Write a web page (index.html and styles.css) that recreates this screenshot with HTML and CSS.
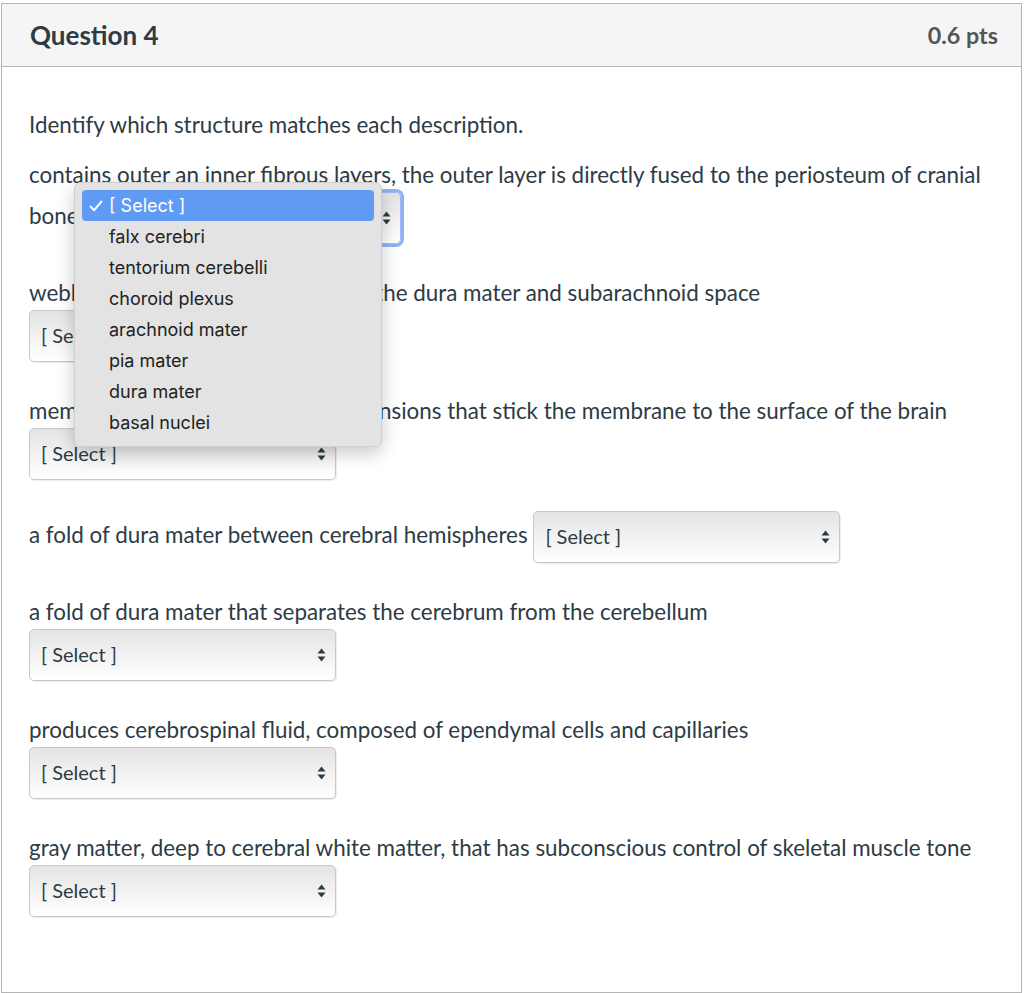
FILE: index.html
```html
<!DOCTYPE html>
<html lang="en">
<head>
    <meta charset="UTF-8">
    <meta name="viewport" content="width=device-width, initial-scale=1.0">
    <title>Question 4</title>
    <link rel="stylesheet" href="styles.css">
</head>
<body>

<div class="question">
    <div class="question-header">
        <span class="question-name">Question 4</span>
        <span class="question-points">0.6 pts</span>
    </div>

    <div class="question-body">
        <p class="question-intro">Identify which structure matches each description.</p>

        <p class="question-item">contains outer an inner fibrous layers, the outer layer is directly fused to the periosteum of cranial bones
            <span class="select-wrap">
                <span class="select-box is-focused">
                    <span class="select-value">[ Select ]</span>
                    <svg class="select-arrows" width="9" height="16" viewBox="0 0 9 16"><path d="M4.5 1.5L8.5 6.5H0.5Z M4.5 14.5L0.5 9.5H8.5Z"/></svg>
                </span>
                <span class="dropdown" role="listbox">
                    <span class="dropdown-option is-selected" role="option">
                        <svg class="dropdown-check" width="14" height="12" viewBox="0 0 14 12"><path d="M1.5 6.5L5.2 10.2L12.5 1.5"/></svg>
                        [ Select ]
                    </span>
                    <span class="dropdown-option" role="option">falx cerebri</span>
                    <span class="dropdown-option" role="option">tentorium cerebelli</span>
                    <span class="dropdown-option" role="option">choroid plexus</span>
                    <span class="dropdown-option" role="option">arachnoid mater</span>
                    <span class="dropdown-option" role="option">pia mater</span>
                    <span class="dropdown-option" role="option">dura mater</span>
                    <span class="dropdown-option" role="option">basal nuclei</span>
                </span>
            </span>
        </p>

        <p class="question-item">weblike membrane found between the dura mater and subarachnoid space
            <span class="select-box">
                <span class="select-value">[ Select ]</span>
                <svg class="select-arrows" width="9" height="16" viewBox="0 0 9 16"><path d="M4.5 1.5L8.5 6.5H0.5Z M4.5 14.5L0.5 9.5H8.5Z"/></svg>
            </span>
        </p>

        <p class="question-item">membrane that is delicate with extensions that stick the membrane to the surface of the brain
            <span class="select-box">
                <span class="select-value">[ Select ]</span>
                <svg class="select-arrows" width="9" height="16" viewBox="0 0 9 16"><path d="M4.5 1.5L8.5 6.5H0.5Z M4.5 14.5L0.5 9.5H8.5Z"/></svg>
            </span>
        </p>

        <p class="question-item">a fold of dura mater between cerebral hemispheres
            <span class="select-box">
                <span class="select-value">[ Select ]</span>
                <svg class="select-arrows" width="9" height="16" viewBox="0 0 9 16"><path d="M4.5 1.5L8.5 6.5H0.5Z M4.5 14.5L0.5 9.5H8.5Z"/></svg>
            </span>
        </p>

        <p class="question-item">a fold of dura mater that separates the cerebrum from the cerebellum
            <span class="select-box">
                <span class="select-value">[ Select ]</span>
                <svg class="select-arrows" width="9" height="16" viewBox="0 0 9 16"><path d="M4.5 1.5L8.5 6.5H0.5Z M4.5 14.5L0.5 9.5H8.5Z"/></svg>
            </span>
        </p>

        <p class="question-item">produces cerebrospinal fluid, composed of ependymal cells and capillaries
            <span class="select-box">
                <span class="select-value">[ Select ]</span>
                <svg class="select-arrows" width="9" height="16" viewBox="0 0 9 16"><path d="M4.5 1.5L8.5 6.5H0.5Z M4.5 14.5L0.5 9.5H8.5Z"/></svg>
            </span>
        </p>

        <p class="question-item">gray matter, deep to cerebral white matter, that has subconscious control of skeletal muscle tone
            <span class="select-box">
                <span class="select-value">[ Select ]</span>
                <svg class="select-arrows" width="9" height="16" viewBox="0 0 9 16"><path d="M4.5 1.5L8.5 6.5H0.5Z M4.5 14.5L0.5 9.5H8.5Z"/></svg>
            </span>
        </p>
    </div>
</div>

</body>
</html>
```

FILE: styles.css
```css
body {
    margin: 0;
    font-family: Lato, "Open Sans", Arial, sans-serif;
    color: #2d3b45;
    background-color: #fff;
}
.question {
    margin: 3px 2px 0 1px;
    border: 1px solid #b5b5b5;
    height: 990px;
    box-sizing: border-box;
}
.question-header {
    display: flex;
    justify-content: space-between;
    align-items: center;
    height: 63px;
    padding: 0 23px 0 28px;
    background-color: #f5f5f5;
    border-bottom: 1px solid #b5b5b5;
    box-sizing: border-box;
}
.question-name {
    font-size: 26px;
    font-weight: bold;
    color: #2d3b45;
}
.question-points {
    font-size: 23.3px;
    font-weight: bold;
    color: #555;
}
.question-body {
    padding: 40px 26px 0 27px;
    font-size: 22.4px;
    line-height: 35px;
}
.question-body p {
    margin: 0;
}
.question-intro {
    margin-bottom: 15px !important;
}
.question-item {
    margin-bottom: 31px !important;
}

/* fake select */
.select-wrap {
    position: relative;
    display: inline-block;
    vertical-align: middle;
}
.select-box {
    display: inline-flex;
    align-items: center;
    justify-content: space-between;
    vertical-align: middle;
    width: 307px;
    height: 52px;
    padding: 0 9px 0 11px;
    box-sizing: border-box;
    border: 1px solid #c8c8c8;
    border-radius: 5px;
    background: linear-gradient(to bottom, #e4e4e4 0%, #f3f3f3 55%, #ffffff 100%);
    box-shadow: 1px 1px 1px rgba(0,0,0,0.08);
    font-size: 20px;
    line-height: 1;
    color: #2d3b45;
}
.select-wrap .select-box {
    display: flex;
}
.select-box.is-focused {
    box-shadow: 0 0 0 3px #8fb2f6;
    border-color: #9bb9f3;
}
.select-value {
    padding-bottom: 2px;
}
.select-arrows {
    fill: #2d3b45;
}

/* open list */
.dropdown {
    position: absolute;
    left: -20px;
    top: -10px;
    z-index: 5;
    width: 308px;
    padding: 7px 7px 8px 7px;
    box-sizing: border-box;
    background-color: #e3e3e3;
    border: 1px solid #cfcfcf;
    border-radius: 7px;
    box-shadow: 0 6px 18px rgba(0,0,0,0.22);
    font-family: Inter, "Noto Sans", Arial, sans-serif;
    font-size: 18px;
    line-height: 31px;
    color: #222;
}
.dropdown-option {
    display: flex;
    align-items: center;
    height: 31px;
    padding-left: 27px;
    border-radius: 4px;
}
.dropdown-option.is-selected {
    position: relative;
    background-color: #5f9bf4;
    color: #fff;
}
.dropdown-check {
    position: absolute;
    left: 7px;
    top: 10px;
    fill: none;
    stroke: #fff;
    stroke-width: 2;
    stroke-linecap: round;
    stroke-linejoin: round;
}
```
